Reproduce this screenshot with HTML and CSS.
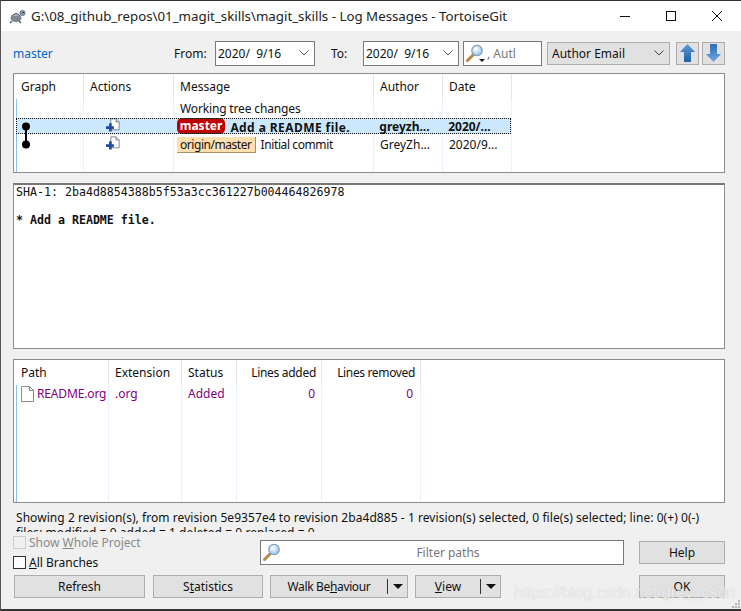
FILE: index.html
```html
<!DOCTYPE html>
<html lang="en">
<head>
<meta charset="utf-8">
<title>Log Messages - TortoiseGit</title>
<link rel="stylesheet" href="styles.css">
</head>
<body>
<div class="window">
  <header class="titlebar">
    <svg class="app-icon" width="17" height="15" viewBox="0 0 17 15"><ellipse cx="7" cy="9" rx="5.5" ry="4" fill="#7d8794"/><path d="M3 7 Q7 2 11 7" fill="#a9b3bf" stroke="#4e5968"/><circle cx="13.5" cy="4" r="2.6" fill="#8fa0b4" stroke="#4e5968" stroke-width=".7"/><path d="M3 12l-2 2M10 12l2 2" stroke="#555" stroke-width="1.4"/><circle cx="14" cy="3.5" r=".8" fill="#223"/></svg>
    <span class="title-text">G:\08_github_repos\01_magit_skills\magit_skills - Log Messages - TortoiseGit</span>
    <div class="win-controls">
      <svg width="12" height="12" viewBox="0 0 12 12"><path d="M1 6.500h10" stroke="#111"/></svg>
      <svg width="12" height="12" viewBox="0 0 12 12"><rect x="1.500" y="1.500" width="9" height="9" fill="none" stroke="#111"/></svg>
      <svg width="12" height="12" viewBox="0 0 12 12"><path d="M1 1l10 10M11 1L1 11" stroke="#111"/></svg>
    </div>
  </header>

  <main class="content">
    <div class="toolbar">
      <a class="branch-link">master</a>
      <label class="from-label">From:</label>
      <div class="input date-from"><span>2020/&nbsp; 9/16</span><svg class="chev" width="10" height="6" viewBox="0 0 10 6"><path d="M.5.5L5 5 9.500.5" fill="none" stroke="#555"/></svg></div>
      <label class="to-label">To:</label>
      <div class="input date-to"><span>2020/&nbsp; 9/16</span><svg class="chev" width="10" height="6" viewBox="0 0 10 6"><path d="M.5.5L5 5 9.500.5" fill="none" stroke="#555"/></svg></div>
      <div class="input search">
        <svg width="19" height="19" viewBox="0 0 19 19"><use href="#glass"/><path d="M13 15h6l-3 3z" fill="#111"/></svg>
        <span class="hint">, Autl</span>
      </div>
      <div class="combo"><span>Author Email</span><svg class="chev" width="10" height="6" viewBox="0 0 10 6"><path d="M.5.5L5 5 9.500.5" fill="none" stroke="#444"/></svg></div>
      <button class="arrow-btn up"><svg width="15" height="18" viewBox="0 0 15 18"><path d="M7.500 0L15 8h-4v10H4V8H0z" fill="url(#arrowfill)"/></svg></button>
      <button class="arrow-btn"><svg width="15" height="18" viewBox="0 0 15 18"><path d="M7.500 18L15 10h-4V0H4v10H0z" fill="url(#arrowfill2)"/></svg></button>
    </div>

    <section class="list log-list">
      <div class="list-head">
        <div class="c-graph">Graph</div><div class="c-actions">Actions</div><div class="c-msg">Message</div><div class="c-author">Author</div><div class="c-date">Date</div>
      </div>
      <div class="list-body">
        <div class="row wt-row">
          <div class="c-graph"></div><div class="c-actions"></div><div class="c-msg"><span class="wt-text">Working tree changes</span></div><div class="c-author"></div><div class="c-date"></div>
        </div>
        <div class="row selected">
          <div class="c-graph"><svg width="30" height="18" viewBox="0 0 30 18"><circle cx="10" cy="8.500" r="4" fill="#000"/><path d="M10 8.500V18" stroke="#000" stroke-width="2"/></svg></div>
          <div class="c-actions"><svg width="14" height="14" viewBox="0 0 16 15"><use href="#addfile"/></svg></div>
          <div class="c-msg"><span class="tag tag-local">master</span><b class="sel-msg">Add a README file.</b></div>
          <div class="c-author"><b>greyzh...</b></div>
          <div class="c-date"><b>2020/...</b></div>
        </div>
        <div class="row commit-row">
          <div class="c-graph"><svg width="30" height="18" viewBox="0 0 30 18"><circle cx="10" cy="8.500" r="4" fill="#000"/><path d="M10 0v8.500" stroke="#000" stroke-width="2"/></svg></div>
          <div class="c-actions"><svg width="14" height="14" viewBox="0 0 16 15"><use href="#addfile"/></svg></div>
          <div class="c-msg"><span class="tag tag-remote">origin/master</span><span class="commit-msg">Initial commit</span></div>
          <div class="c-author">GreyZh...</div>
          <div class="c-date">2020/9...</div>
        </div>
      </div>
    </section>

    <section class="message">
      <div>SHA-1: 2ba4d8854388b5f53a3cc361227b004464826978</div>
      <div>&nbsp;</div>
      <div><b>* Add a README file.</b></div>
    </section>

    <section class="list file-list">
      <div class="list-head">
        <div class="f-path">Path</div><div class="f-ext">Extension</div><div class="f-status">Status</div><div class="f-added">Lines added</div><div class="f-removed">Lines removed</div>
      </div>
      <div class="list-body">
        <div class="row file-row">
          <div class="f-path"><svg width="13" height="16" viewBox="0 0 13 16"><path d="M.5.5h8l4 4v11H.5z" fill="#fff" stroke="#8a8a8a"/><path d="M8.500.5v4h4" fill="none" stroke="#8a8a8a"/></svg><span class="file-name">README.org</span></div>
          <div class="f-ext">.org</div><div class="f-status">Added</div><div class="f-added">0</div><div class="f-removed">0</div>
        </div>
      </div>
    </section>

    <div class="status">
      Showing 2 revision(s), from revision 5e9357e4 to revision 2ba4d885 - 1 revision(s) selected, 0 file(s) selected; line: 0(+) 0(-)<br>
      files: modified = 0 added = 1 deleted = 0 replaced = 0
    </div>

    <div class="options">
      <div class="checks">
        <label class="check disabled"><span class="box"></span><span>Show <u>W</u>hole Project</span></label>
        <label class="check"><span class="box"></span><span><u>A</u>ll Branches</span></label>
      </div>
      <div class="input filter">
        <svg width="19" height="19" viewBox="0 0 19 19"><use href="#glass"/></svg>
        <span class="filter-hint">Filter paths</span>
      </div>
      <button class="btn help">Help</button>
    </div>

    <div class="actions">
      <button class="btn refresh">Refresh</button>
      <button class="btn statistics">S<u>t</u>atistics</button>
      <button class="btn split walk"><span class="split-label">Walk Be<u>h</u>aviour</span><span class="split-arrow"></span></button>
      <button class="btn split view"><span class="split-label"><u>V</u>iew</span><span class="split-arrow"></span></button>
      <button class="btn ok">OK</button>
    </div>
  </main>

  <span class="watermark">https://blog.csdn.net/grey_csdn</span>
  <svg class="grip" width="10" height="10" viewBox="0 0 10 10"><path d="M8 1h2v2H8zM8 4h2v2H8zM5 4h2v2H5zM8 7h2v2H8zM5 7h2v2H5zM2 7h2v2H2z" fill="#b5b5b5"/></svg>
</div>

<svg class="defs" width="0" height="0">
  <defs>
    <linearGradient id="arrowfill" x1="0" y1="0" x2="0" y2="1"><stop offset="0" stop-color="#5a9bd8"/><stop offset="1" stop-color="#1f5fa8"/></linearGradient>
    <linearGradient id="arrowfill2" x1="0" y1="0" x2="0" y2="1"><stop offset="0" stop-color="#2f6db5"/><stop offset="1" stop-color="#6ea8de"/></linearGradient>
    <radialGradient id="lens" cx=".4" cy=".35" r=".7"><stop offset="0" stop-color="#fff"/><stop offset="1" stop-color="#8fc0ea"/></radialGradient>
    <g id="glass">
      <path d="M7 11L1.500 16.500" stroke="#b8864a" stroke-width="3" stroke-linecap="round"/>
      <circle cx="11" cy="6.500" r="5.200" fill="url(#lens)" stroke="#7f9cb5" stroke-width="1.200"/>
    </g>
    <g id="addfile">
      <path d="M5.500.5h6l3.500 3.500v9H5.500z" fill="#fff" stroke="#6f7885"/>
      <path d="M11.500.5V4H15" fill="#dfe3e8" stroke="#6f7885"/>
      <path d="M0 9h3.500V5.500h3V9H9v3H6.500v3h-3v-3H0z" fill="#2349a8"/>
    </g>
  </defs>
</svg>
</body>
</html>
```
FILE: styles.css
```css
* { box-sizing: border-box; }
html, body { margin: 0; padding: 0; }
body {
  width: 741px;
  height: 611px;
  overflow: hidden;
  font-family: "Noto Sans", "Open Sans", sans-serif;
  font-size: 12px;
  color: #111;
}
.defs { position: absolute; }
.window {
  position: relative;
  width: 741px;
  height: 611px;
  background: #f0f0f0;
  border-top: 1px solid #333;
  border-left: 1px solid #555;
  border-bottom: 2px solid #333;
  overflow: hidden;
}
.titlebar {
  height: 30px;
  background: #fff;
  display: flex;
  align-items: center;
  padding-left: 8px;
}
.title-text { margin-left: 5px; font-size: 13.3px; color: #222; white-space: nowrap; }
.win-controls {
  margin-left: auto;
  display: flex;
  gap: 34px;
  padding-right: 18px;
}
.content { padding: 0 15px 0 12px; }

.toolbar {
  height: 42px;
  display: flex;
  align-items: center;
  padding-top: 2px;
}
.branch-link { width: 161px; color: #0066cc; }
.from-label { width: 41px; }
.to-label { width: 32px; margin-left: 16px; }
.input {
  height: 25px;
  background: #fff;
  border: 1px solid #7a7a7a;
  display: flex;
  align-items: center;
  padding-left: 2px;
}
.date-from { width: 100px; }
.date-to { width: 96px; }
.chev { margin-left: auto; margin-right: 5px; }
.search { width: 79px; margin-left: 4px; gap: 2px; }
.hint { color: #777; }
.combo {
  width: 123px;
  height: 23px;
  margin-left: 5px;
  background: #e1e1e1;
  border: 1px solid #adadad;
  display: flex;
  align-items: center;
  padding-left: 4px;
}
.arrow-btn {
  width: 23px;
  height: 23px;
  padding: 0;
  background: #e1e1e1;
  border: 1px solid #adadad;
  display: flex;
  align-items: center;
  justify-content: center;
  margin-left: 3px;
}
.arrow-btn.up { margin-left: 6px; }

.list {
  background: #fff;
  border: 1px solid #8c8c8c;
  width: 712px;
  overflow: hidden;
}
.log-list { height: 100px; }
.file-list { height: 144px; margin-top: 10px; }
.list-head, .row { display: flex; }
.list-head { height: 25px; line-height: 26px; }
.list-head > div { border-right: 1px solid #e5e5e5; padding-left: 6px; }
.list-head > .c-graph, .list-head > .f-path { padding-left: 7px; }
.list-body {
  height: 100%;
  margin-left: 2px;
  border-left: 1px solid #8fc1f5;
  background-repeat: no-repeat;
  background-size: 1px 100%;
  background-image:
    linear-gradient(#e8f2fd, #e8f2fd), linear-gradient(#e8f2fd, #e8f2fd),
    linear-gradient(#e8f2fd, #e8f2fd), linear-gradient(#e8f2fd, #e8f2fd),
    linear-gradient(#e8f2fd, #e8f2fd);
}
.row { height: 17px; line-height: 17px; margin-left: -1px; white-space: nowrap; }
.row > div { padding-left: 6px; height: 100%; }

.c-graph { width: 70px; }
.c-actions { width: 90px; }
.c-msg { width: 200px; }
.c-author { width: 69px; }
.c-date { width: 69px; }

.log-list .list-body {
  height: 73px;
  background-position: 66px 0, 156px 0, 356px 0, 425px 0, 494px 0;
}
.row .c-graph { width: 68px; padding-left: 0; }
.row .c-actions { padding-left: 22px; }
.row svg { display: block; overflow: visible; }
.row .c-msg { display: flex; align-items: center; padding-left: 3px; }
.wt-row { height: 19px; }
.wt-row .c-msg { padding-left: 6px; }
.wt-text { letter-spacing: -.15px; }
.row.selected {
  height: 16px;
  line-height: 17px;
  margin-bottom: 2px;
  background: #cce8ff;
  outline: 1px dotted #111;
  outline-offset: -1px;
  width: 495px;
}
.selected .sel-msg { position: relative; top: 1px; }
.commit-msg { letter-spacing: -.4px; }
.sel-msg { letter-spacing: .42px; }
.tag {
  padding: 0 3px;
  height: 16px;
  line-height: 15px;
  margin-right: 5px;
}
.tag-local { background: #c00000; color: #fff; font-weight: 700; border-radius: 5px; }
.tag-remote {
  background: #ffdfae;
  border-right: 1px solid #a98e68;
  border-bottom: 1px solid #a98e68;
  letter-spacing: -.45px;
}

.message {
  height: 166px;
  width: 712px;
  margin-top: 10px;
  background: #fff;
  border: 1px solid #8c8c8c;
  border-top: 2px solid #777;
  padding: 0 2px;
  font-family: "DejaVu Sans Mono", monospace;
  font-size: 11.62px;
  line-height: 14px;
}

.f-path { width: 95px; }
.f-ext { width: 73px; }
.f-status { width: 55px; }
.f-added { width: 85px; text-align: right; padding-right: 5px; }
.f-removed { width: 99px; text-align: right; padding-right: 5px; }
.list-head > .f-added { letter-spacing: -.3px; }
.list-head > .f-removed { letter-spacing: -.35px; }
.file-list .list-body {
  height: 117px;
  background-position: 91px 0, 164px 0, 219px 0, 304px 0, 403px 0;
}
.file-row { height: 17px; line-height: 17px; color: #800080; }
.row .f-path { width: 93px; display: flex; align-items: center; gap: 3px; padding-left: 5px; overflow: hidden; }
.file-name { letter-spacing: -.15px; }
.row .f-added { padding-right: 7px; }
.row .f-removed { padding-right: 8px; }

.status {
  height: 27px;
  margin-top: 2px;
  padding: 5px 0 0 3px;
  line-height: 15px;
  letter-spacing: .06px;
  overflow: hidden;
  white-space: nowrap;
}

.options {
  height: 43px;
  display: flex;
  align-items: flex-start;
}
.checks { width: 247px; margin-top: 2px; display: flex; flex-direction: column; gap: 4px; }
.check { display: flex; align-items: center; height: 16px; gap: 3px; }
.check.disabled { color: #8a8a8a; }
.box { width: 13px; height: 13px; background: #fff; border: 1px solid #333; }
.check.disabled .box { border-color: #ccc; background: #f0f0f0; }
.filter {
  width: 364px;
  margin-top: 8px;
  position: relative;
}
.filter-hint { position: absolute; left: 12px; right: 0; text-align: center; color: #777; pointer-events: none; }
.help { margin-left: 15px; margin-top: 9px; }

.btn {
  height: 23px;
  padding: 0;
  background: #e1e1e1;
  border: 1px solid #adadad;
  font: inherit;
  color: #111;
  display: inline-flex;
  align-items: center;
  justify-content: center;
}
.help, .ok { width: 86px; }
.actions { display: flex; }
.refresh { width: 131px; margin-left: 1px; }
.statistics { width: 110px; margin-left: 8px; }
.walk { width: 138px; margin-left: 7px; }
.view { width: 86px; margin-left: 7px; }
.ok { margin-left: 138px; }
.split-label { flex: 1; text-align: center; border-right: 1px solid #333; height: 15px; line-height: 15px; }
.walk .split-label { letter-spacing: -.35px; }
.split-arrow { width: 19px; display: flex; justify-content: center; }
.split-arrow::before {
  content: "";
  border-left: 5px solid transparent;
  border-right: 5px solid transparent;
  border-top: 5px solid #111;
}

.watermark {
  position: absolute;
  left: 513px;
  top: 583px;
  font-family: "Liberation Sans", sans-serif;
  font-size: 16px;
  color: rgba(255, 255, 255, .72);
  text-shadow: 0 0 1px rgba(120, 120, 120, .4);
  white-space: nowrap;
}
.grip { position: absolute; right: 1px; bottom: 0; }
```
